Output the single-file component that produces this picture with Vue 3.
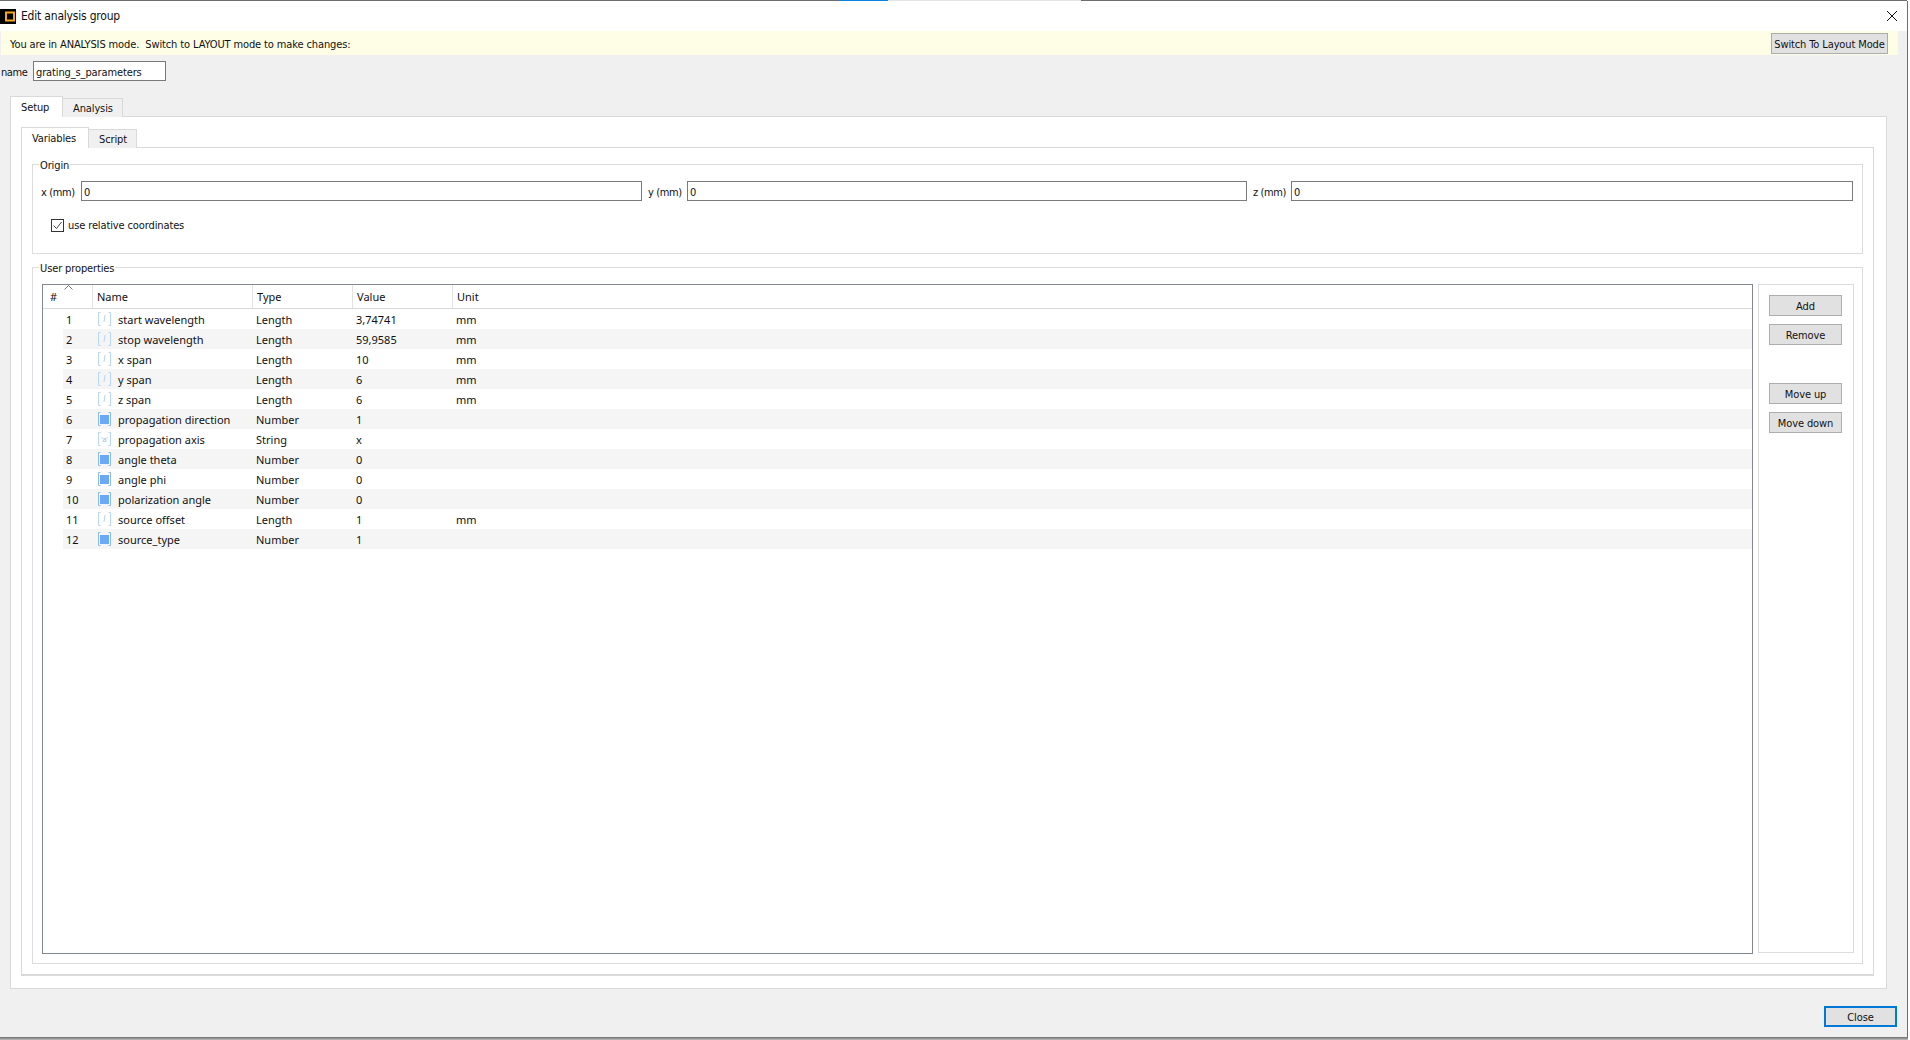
<script setup>
const rows = [
  ['start wavelength', 'Length', '3,74741', 'mm', 'len'],
  ['stop wavelength', 'Length', '59,9585', 'mm', 'len'],
  ['x span', 'Length', '10', 'mm', 'len'],
  ['y span', 'Length', '6', 'mm', 'len'],
  ['z span', 'Length', '6', 'mm', 'len'],
  ['propagation direction', 'Number', '1', '', 'num'],
  ['propagation axis', 'String', 'x', '', 'str'],
  ['angle theta', 'Number', '0', '', 'num'],
  ['angle phi', 'Number', '0', '', 'num'],
  ['polarization angle', 'Number', '0', '', 'num'],
  ['source offset', 'Length', '1', 'mm', 'len'],
  ['source_type', 'Number', '1', '', 'num'],
]
const coords = [
  { label: 'x (mm)', cls: 'cx' },
  { label: 'y (mm)', cls: 'cy' },
  { label: 'z (mm)', cls: 'cz' },
]
</script>

<template>
  <div class="screen">
    <div class="topline">
      <span class="seg-dark a"></span><span class="seg-blue"></span><span class="seg-light"></span><span class="seg-dark b"></span>
    </div>
    <div class="window">
      <div class="titlebar">
        <svg class="appicon" width="16" height="15" viewBox="0 0 16 15">
          <rect width="16" height="15" fill="#000" />
          <rect x="6" y="3.500" width="8" height="8" fill="none" stroke="#f5a81c" stroke-width="2" />
        </svg>
        <span class="title">Edit analysis group</span>
        <svg class="closex" width="10" height="10" viewBox="0 0 10 10">
          <path d="M0 0l10 10M10 0l-10 10" stroke="#111" stroke-width="1" fill="none" />
        </svg>
      </div>
      <div class="notice">
        <span class="notice-text">You are in ANALYSIS mode.&nbsp; Switch to LAYOUT mode to make changes:</span>
        <button class="btn switch">Switch To Layout Mode</button>
      </div>
      <div class="namerow">
        <span>name</span>
        <div class="input nameinput">grating_s_parameters</div>
      </div>

      <div class="tabs outer">
        <div class="tab active">Setup</div>
        <div class="tab">Analysis</div>
      </div>
      <div class="panel outerpanel">
        <div class="tabs innertabs">
          <div class="tab active v">Variables</div>
          <div class="tab s">Script</div>
        </div>
        <div class="panel innerpanel">
          <div class="group origin">
            <span class="legend">Origin</span>
            <div class="coordrow">
              <template v-for="c in coords" :key="c.label">
                <span class="coordlabel" :class="c.cls">{{ c.label }}</span>
                <div class="input coord" :class="c.cls">0</div>
              </template>
            </div>
            <label class="check">
              <svg width="13" height="13" viewBox="0 0 13 13">
                <rect x=".5" y=".5" width="12" height="12" fill="#fff" stroke="#333" />
                <path d="M2.500 6.500l3 3 5-6.500" fill="none" stroke="#444" stroke-width="1" />
              </svg>
              <span>use relative coordinates</span>
            </label>
          </div>

          <div class="group props">
            <span class="legend">User properties</span>
            <div class="table">
              <div class="thead">
                <div class="th c0">#<svg class="sort" width="9" height="5" viewBox="0 0 9 5"><path d="M.5 4.500l4-4 4 4" fill="none" stroke="#777" /></svg></div>
                <div class="th c1">Name</div>
                <div class="th c2">Type</div>
                <div class="th c3">Value</div>
                <div class="th c4">Unit</div>
              </div>
              <div v-for="(r, i) in rows" :key="r[0]" class="row" :class="{ band: i % 2 === 1 }">
                <div class="num">{{ i + 1 }}</div>
                <div class="td c1 namecell">
                  <svg class="typeicon" width="15" height="14" viewBox="0 0 15 14">
                    <path d="M3.500.500h-2v13h2M11.500.500h2v13h-2" fill="none" :stroke="r[4] === 'num' ? '#8dbcf3' : '#b9d5f7'" />
                    <rect v-if="r[4] === 'num'" x="3" y="3" width="9" height="9" fill="#6ba8f5" />
                    <path v-else-if="r[4] === 'len'" d="M8 3l-1 7" stroke="#b9d5f7" fill="none" />
                    <text v-else x="7.500" y="9.500" text-anchor="middle" font-size="7" font-family="Liberation Sans, sans-serif" fill="#8dbcf3">'a'</text>
                  </svg>
                  <span class="propname">{{ r[0] }}</span>
                </div>
                <div class="td c2">{{ r[1] }}</div>
                <div class="td c3">{{ r[2] }}</div>
                <div class="td c4">{{ r[3] }}</div>
              </div>
            </div>
            <div class="side">
              <button class="btn act">Add</button>
              <button class="btn act">Remove</button>
              <button class="btn act up">Move up</button>
              <button class="btn act">Move down</button>
            </div>
          </div>
        </div>
      </div>

      <div class="footer">
        <button class="btn closebtn">Close</button>
      </div>
    </div>
    <div class="bottomedge"></div>
  </div>
</template>

<style>
html, body { margin: 0; padding: 0; background: #fff; overflow: hidden; }
</style>

<style scoped>
* { box-sizing: border-box; }
.screen {
  width: 1910px;
  height: 1040px;
  display: flex;
  flex-direction: column;
  font-family: "DejaVu Sans", "Noto Sans", sans-serif;
  font-stretch: condensed;
  font-size: 11px;
  letter-spacing: -0.12px;
  color: #111;
  background: #fff;
  overflow: hidden;
}
.topline { display: flex; height: 1px; flex: none; width: 1907px; }
.seg-dark { background: #6d6d6d; }
.seg-dark.a { width: 840px; }
.seg-blue { width: 48px; background: #0a84e0; }
.seg-light { width: 193px; background: #e4e4e4; }
.seg-dark.b { flex: 1; }
.window {
  width: 1908px;
  height: 1036px;
  flex: none;
  display: flex;
  flex-direction: column;
  background: #f0f0f0;
  border-right: 1px solid #6d6d6d;
}
.bottomedge { flex: 1; width: 1908px; background: linear-gradient(#6d6d6d, #bdbdbd); }
.titlebar {
  height: 30px;
  flex: none;
  background: #fff;
  display: flex;
  align-items: center;
}
.appicon { flex: none; }
.title { margin-left: 5px; font-size: 12px; letter-spacing: -0.2px; }
.closex { margin-left: auto; margin-right: 10px; }
.notice {
  height: 24px;
  flex: none;
  margin-right: 9px;
  margin-left: 1px;
  background: #fefee6;
  display: flex;
  align-items: center;
  justify-content: space-between;
  padding: 0 10px 0 9px;
}
.notice-text { padding-top: 2px; }
.btn {
  font: inherit;
  letter-spacing: inherit;
  color: #111;
  background: #e1e1e1;
  border: 1px solid #adadad;
  padding: 2px 0 0;
  height: 21px;
  line-height: 17px;
  text-align: center;
  white-space: nowrap;
}
.switch { width: 117px; }
.namerow {
  height: 20px;
  flex: none;
  margin-top: 6px;
  padding-left: 1px;
  display: flex;
  align-items: center;
}
.namerow span { width: 32px; flex: none; padding-top: 2px; letter-spacing: -0.4px; }
.input {
  background: #fff;
  border: 1px solid #7a7a7a;
  height: 20px;
  line-height: 18px;
  padding: 2px 0 0 2px;
}
.nameinput { width: 133px; }
.tabs { display: flex; align-items: flex-end; flex: none; position: relative; z-index: 1; }
.outer { margin: 15px 0 0 10px; height: 21px; }
.tab {
  height: 19px;
  padding: 0 9px;
  line-height: 19px;
  background: #f0f0f0;
  border: 1px solid #d9d9d9;
  border-left: none;
  border-bottom: none;
}
.tab.active {
  height: 21px;
  background: #fff;
  border-left: 1px solid #d9d9d9;
  line-height: 21px;
}
.outer .tab.active { width: 53px; padding: 0 0 0 10px; }
.outer .tab:not(.active) { width: 60px; padding: 0 0 0 10px; }
.panel { background: #fff; border: 1px solid #d9d9d9; }
.outerpanel {
  flex: none;
  margin: -1px 20px 0 10px;
  height: 873px;
  padding: 10px 12px 12px 10px;
  display: flex;
  flex-direction: column;
}
.innertabs { height: 21px; }
.innertabs .tab.v { width: 68px; padding: 0 0 0 10px; }
.innertabs .tab.s { width: 48px; padding: 0 0 0 10px; }
.innerpanel {
  flex: 1;
  margin-top: -1px;
  padding: 16px 10px 10px 10px;
  display: flex;
  flex-direction: column;
  border-bottom-width: 2px;
}
.group { position: relative; border: 1px solid #dcdcdc; }
.legend {
  position: absolute;
  top: -6px;
  left: 6px;
  padding: 0 1px;
  line-height: 14px;
  background: #fff;
}
.origin { height: 90px; flex: none; padding: 16px 8px 0 8px; }
.coordrow { display: flex; align-items: center; height: 20px; }
.coordlabel { flex: none; white-space: nowrap; padding-top: 2px; letter-spacing: -0.4px; }
.coordlabel.cx { width: 40px; }
.coordlabel.cy { width: 39px; }
.coordlabel.cz { width: 38px; }
.coordlabel.cy, .coordlabel.cz { margin-left: 6px; }
.coord { flex: none; }
.coord.cx { width: 561px; }
.coord.cy { width: 560px; }
.coord.cz { width: 562px; }
.check { display: flex; align-items: center; gap: 4px; margin: 18px 0 0 10px; }
.check svg { flex: none; }
.props {
  flex: 1;
  margin-top: 13px;
  display: flex;
  padding: 16px 8px 9px 9px;
  gap: 5px;
}
.table {
  width: 1711px;
  flex: none;
  border: 1px solid #828790;
  background: #fff;
  display: flex;
  flex-direction: column;
  font-family: "Noto Sans", sans-serif;
  font-stretch: normal;
  letter-spacing: 0;
}
.thead { display: flex; height: 24px; flex: none; border-bottom: 1px solid #d9d9d9; }
.th {
  height: 23px;
  line-height: 23px;
  padding-left: 4px;
  border-right: 1px solid #e2e2e2;
  position: relative;
}
.th.c0 { width: 50px; padding-left: 7px; }
.th.c1 { width: 160px; }
.th.c2 { width: 100px; }
.th.c3 { width: 100px; }
.th.c4 { flex: 1; border-right: none; }
.sort { position: absolute; left: 21px; top: 0; }
.row { display: flex; height: 20px; flex: none; line-height: 22px; margin-left: 20px; }
.row.band { background: #f5f5f5; }
.num { width: 30px; flex: none; padding-left: 3px; white-space: nowrap; }
.td { padding-left: 3px; white-space: nowrap; }
.td.c1 { width: 160px; display: flex; align-items: center; padding-left: 4px; height: 20px; }
.td.c2 { width: 100px; }
.td.c3 { width: 100px; }
.td.c4 { flex: 1; }
.typeicon { flex: none; margin-right: 6px; }
.propname { margin-top: 2px; }
.side {
  width: 96px;
  flex: none;
  border: 1px solid #dcdcdc;
  padding: 10px 0 0 10px;
  margin-bottom: 1px;
  display: flex;
  flex-direction: column;
  align-items: flex-start;
  gap: 8px;
}
.act { width: 73px; flex: none; }
.act.up { margin-top: 30px; }
.footer {
  flex: 1;
  display: flex;
  justify-content: flex-end;
  padding: 17px 10px 0 0;
}
.closebtn { width: 73px; border: 2px solid #0078d7; line-height: 15px; }
</style>
